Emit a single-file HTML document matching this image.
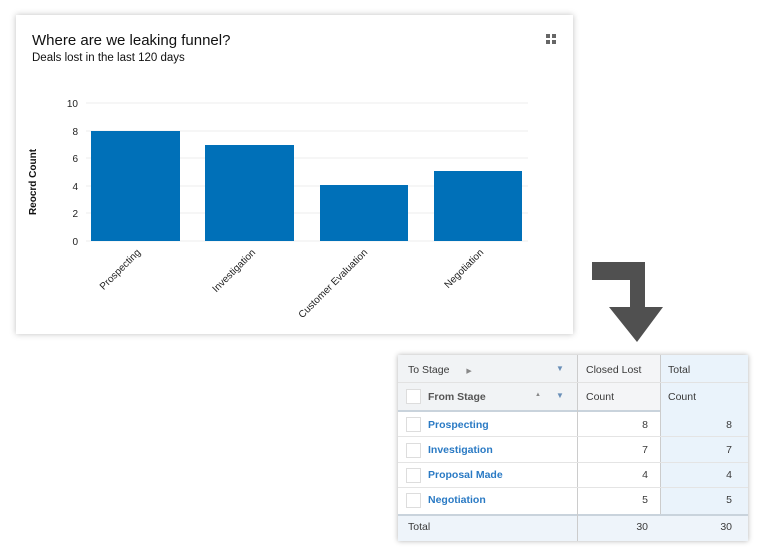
<!DOCTYPE html>
<html><head><style>
body{margin:0;width:768px;height:558px;background:#fff;position:relative;overflow:hidden;font-family:"Liberation Sans",sans-serif}
.card{position:absolute;left:16px;top:15px;width:557px;height:319px;background:#fff;box-shadow:0 0 6px rgba(0,0,0,.25)}
.t{position:absolute;left:32px;top:32px;font-size:15px;color:#111}
.s{position:absolute;left:32px;top:52px;font-size:11.5px;color:#111}
.tbl{position:absolute;left:398px;top:355px;width:350px;height:186px;box-shadow:0 0 5px rgba(0,0,0,.3);background:#fff;font-size:10.5px;color:#3a3a3a}
.c{position:absolute;box-sizing:border-box}
.cb{position:absolute;left:8px;width:13px;height:13px;border:1px solid #ddd;background:#fff}
.lnk{color:#2a7ac4;font-weight:bold}
</style></head><body>
<div class="card">
</div>
<div class="t">Where are we leaking funnel?</div>
<div class="s">Deals lost in the last 120 days</div>
<svg style="position:absolute;left:545px;top:33px" width="12" height="12">
<g fill="#666"><rect x="1" y="1" width="4" height="4"/><rect x="7" y="1" width="4" height="4"/><rect x="1" y="7" width="4" height="4"/><rect x="7" y="7" width="4" height="4"/></g>
</svg>
<svg style="position:absolute;left:0;top:0" width="580" height="340">
<g stroke="#eee" stroke-width="1">
<line x1="86" x2="528" y1="103" y2="103"/><line x1="86" x2="528" y1="131" y2="131"/><line x1="86" x2="528" y1="158" y2="158"/><line x1="86" x2="528" y1="186" y2="186"/><line x1="86" x2="528" y1="213" y2="213"/><line x1="86" x2="528" y1="241" y2="241"/>
</g>
<g font-size="10" fill="#222" text-anchor="end" font-family="Liberation Sans">
<text x="78" y="107">10</text><text x="78" y="135">8</text><text x="78" y="162">6</text><text x="78" y="190">4</text><text x="78" y="217">2</text><text x="78" y="245">0</text>
</g>
<g fill="#0070b8">
<rect x="91" y="131" width="89" height="110"/><rect x="205" y="145" width="89" height="96"/><rect x="320" y="185" width="88" height="56"/><rect x="434" y="171" width="88" height="70"/>
</g>
<text transform="translate(36,182) rotate(-90)" font-size="10" font-weight="bold" text-anchor="middle" fill="#111" font-family="Liberation Sans">Reocrd Count</text>
<g font-size="10" fill="#222" text-anchor="end" font-family="Liberation Sans">
<text transform="translate(141,253) rotate(-45)">Prospecting</text>
<text transform="translate(256,253) rotate(-45)">Investigation</text>
<text transform="translate(368,253) rotate(-45)">Customer Evaluation</text>
<text transform="translate(484,253) rotate(-45)">Negotiation</text>
</g>
</svg>
<svg style="position:absolute;left:580px;top:250px" width="100" height="100">
<path d="M12 12H65V57H83L57 92L29 57H50V30H12Z" fill="#505050"/>
</svg>
<div class="tbl">
<div class="c" style="left:0;top:0;width:179px;height:55px;background:#f1f3f5"></div>
<div class="c" style="left:179px;top:0;width:83px;height:55px;background:#f4f5f7;border-left:1px solid #ccc"></div>
<div class="c" style="left:262px;top:0;width:88px;height:186px;background:#eaf3fb;border-left:1px solid #ccc"></div>
<div class="c" style="left:0;top:159px;width:350px;height:27px;background:#eef4fa;border-top:2px solid #c9d3dc"></div>
<div class="c" style="left:0;top:55px;width:262px;height:104px;border-top:2px solid #c9d3dc"></div>
<div class="c" style="left:179px;top:55px;width:1px;height:131px;background:#ccc"></div>
<div class="c" style="left:0;top:81px;width:350px;height:1px;background:#e4e4e4"></div>
<div class="c" style="left:0;top:107px;width:350px;height:1px;background:#e4e4e4"></div>
<div class="c" style="left:0;top:132px;width:350px;height:1px;background:#e4e4e4"></div>
<div class="c" style="left:0;top:27px;width:350px;height:1px;background:#e2e2e2"></div>
<div style="position:absolute;left:10px;top:9px">To Stage <span style="font-size:7px;color:#888;margin-left:14px">▶</span></div>
<div style="position:absolute;left:158px;top:9px;font-size:8px;color:#6a8fb8">▼</div>
<div class="cb" style="top:34px"></div>
<div style="position:absolute;left:30px;top:36px;font-weight:bold;color:#555">From Stage</div>
<div style="position:absolute;left:137px;top:37px;font-size:6px;color:#888">▲</div>
<div style="position:absolute;left:158px;top:36px;font-size:8px;color:#6a8fb8">▼</div>
<div style="position:absolute;left:188px;top:9px">Closed Lost</div>
<div style="position:absolute;left:270px;top:9px">Total</div>
<div style="position:absolute;left:188px;top:36px">Count</div>
<div style="position:absolute;left:270px;top:36px">Count</div>
<div class="cb" style="top:62px"></div><div class="lnk" style="position:absolute;left:30px;top:64px">Prospecting</div>
<div class="cb" style="top:88px"></div><div class="lnk" style="position:absolute;left:30px;top:89px">Investigation</div>
<div class="cb" style="top:113px"></div><div class="lnk" style="position:absolute;left:30px;top:114px">Proposal Made</div>
<div class="cb" style="top:138px"></div><div class="lnk" style="position:absolute;left:30px;top:139px">Negotiation</div>
<div style="position:absolute;left:10px;top:166px">Total</div>
<div style="position:absolute;right:100px;top:64px">8</div><div style="position:absolute;right:16px;top:64px">8</div>
<div style="position:absolute;right:100px;top:89px">7</div><div style="position:absolute;right:16px;top:89px">7</div>
<div style="position:absolute;right:100px;top:114px">4</div><div style="position:absolute;right:16px;top:114px">4</div>
<div style="position:absolute;right:100px;top:139px">5</div><div style="position:absolute;right:16px;top:139px">5</div>
<div style="position:absolute;right:100px;top:166px">30</div><div style="position:absolute;right:16px;top:166px">30</div>
</div>
</body></html>
